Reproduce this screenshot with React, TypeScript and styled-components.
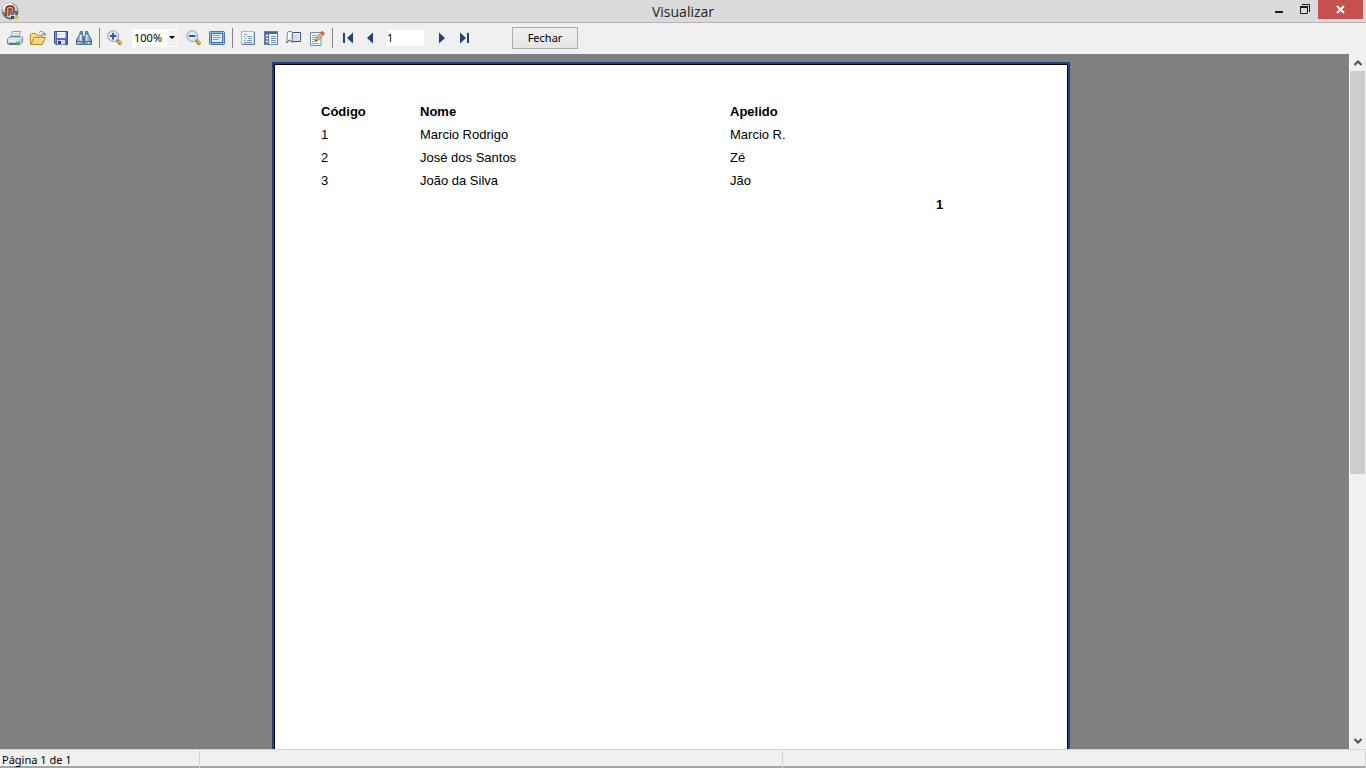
import React, { useState } from "react";
import styled, { createGlobalStyle } from "styled-components";

const GlobalStyle = createGlobalStyle`
  * { box-sizing: border-box; }
  body { margin: 0; background: #f0f0f0; }
`;

const uiFont = `"Segoe UI", "Open Sans", "Noto Sans", sans-serif`;
const smallFont = `Tahoma, "Noto Sans", "Open Sans", sans-serif`;
const navy = "#22427c";

const Window = styled.div`
  display: flex;
  flex-direction: column;
  height: 100vh;
  overflow: hidden;
  font-family: ${uiFont};
  color: #000;
`;

const TitleBar = styled.header`
  display: grid;
  grid-template-columns: 1fr auto 1fr;
  flex: none;
  height: 23px;
  background: #dadada;
  border-bottom: 1px solid #b4b4b4;
`;

const AppIcon = styled.svg`
  width: 18px;
  height: 18px;
  margin: 2px 0 0 1px;
`;

const Title = styled.h1`
  margin: 0;
  font-size: 14px;
  line-height: 23px;
  font-weight: 400;
  color: #222;
`;

const WindowControls = styled.div`
  display: flex;
  justify-content: flex-end;
  padding-right: 3px;
`;

const ControlButton = styled.button<{ $close?: boolean }>`
  display: flex;
  align-items: center;
  justify-content: center;
  width: ${(p) => (p.$close ? 45 : 26)}px;
  height: ${(p) => (p.$close ? 19 : 18)}px;
  padding: 0;
  border: 0;
  background: ${(p) => (p.$close ? "#c75050" : "transparent")};
`;

const Toolbar = styled.div`
  display: flex;
  align-items: center;
  flex: none;
  height: 31px;
  padding: 0 3px 1px;
  background: #f0f0f0;
`;

const ToolButton = styled.button`
  display: flex;
  align-items: center;
  flex: none;
  width: 23px;
  height: 22px;
  padding: 0 3px 0 4px;
  border: 0;
  background: transparent;
  svg { display: block; }
`;

const Separator = styled.span`
  flex: none;
  width: 1px;
  height: 20px;
  margin: 0 3px 0 4px;
  background: #858585;
`;

const ZoomField = styled.label`
  position: relative;
  flex: none;
  width: 46px;
  height: 18px;
  margin: 0 4px 0 6px;
  background: linear-gradient(to right, #fff 35px, #f0f0f0 35px);
  border: 1px solid #fff;
  border-left: 0;
`;

const ZoomSelect = styled.select`
  display: block;
  appearance: none;
  width: 100%;
  height: 16px;
  padding: 0 0 0 2px;
  border: 0;
  background: transparent;
  font-family: ${smallFont};
  font-size: 11px;
  line-height: 16px;
  color: #000;
`;

const ZoomArrow = styled.svg`
  position: absolute;
  right: 2px;
  top: 6px;
  pointer-events: none;
`;

const PageInput = styled.input`
  flex: none;
  width: 37px;
  height: 16px;
  margin: 0 6px 0 5px;
  padding: 0;
  border: 0;
  background: #fff;
  font-family: ${smallFont};
  font-size: 11px;
  line-height: 16px;
  color: #000;
`;

const CloseButton = styled.button`
  flex: none;
  width: 66px;
  height: 22px;
  margin-left: 36px;
  padding: 0;
  border: 1px solid #acacac;
  background: linear-gradient(#f0f0f0, #e5e5e5);
  font-family: ${smallFont};
  font-size: 11px;
  line-height: 20px;
  color: #000;
`;

const Workspace = styled.main`
  display: flex;
  flex: 1;
  min-height: 0;
`;

const Canvas = styled.section`
  flex: 1;
  min-width: 0;
  overflow: hidden;
  padding: 8px 7px 0 0;
  background: #808080;
`;

const Paper = styled.article`
  max-width: 798px;
  min-height: 1128px;
  margin: 0 auto;
  padding: 36px 46px;
  background: #fff;
  border: 2px solid #22407c;
  box-shadow: inset 0 0 0 1px #000010;
`;

const Report = styled.table`
  width: 100%;
  table-layout: fixed;
  border-collapse: collapse;
  font-family: "Liberation Sans", Arial, sans-serif;
  font-size: 13px;
  line-height: 15px;
`;

const Column = styled.col<{ $width?: number }>`
  width: ${(p) => (p.$width ? `${p.$width}px` : "auto")};
`;

const Cell = styled.td`
  height: 23px;
  padding: 0 0 0 1px;
  text-align: left;
  vertical-align: middle;
`;

const Total = styled(Cell)`
  height: 25px;
  font-weight: 700;
`;

const Scrollbar = styled.div`
  display: flex;
  flex-direction: column;
  flex: none;
  width: 17px;
  padding-right: 1px;
  background: #f0f0f0;
  border-left: 1px solid #fff;
`;

const ScrollArrow = styled.button`
  display: flex;
  align-items: center;
  justify-content: center;
  flex: none;
  height: 17px;
  padding: 0;
  border: 0;
  background: transparent;
`;

const ScrollTrack = styled.div`
  flex: 1;
`;

const ScrollThumb = styled.div`
  height: 61%;
  background: #cdcdcd;
`;

const StatusBar = styled.footer`
  display: grid;
  grid-template-columns: 200px 583px 1fr;
  flex: none;
  height: 19px;
  background: #f0f0f0;
  border-top: 1px solid #d4d4d4;
  border-bottom: 2px solid #a6a6a6;
`;

const StatusPanel = styled.span`
  margin-top: 1px;
  padding-left: 2px;
  border-right: 1px solid #d4d4d4;
  font-family: "Noto Sans", "Open Sans", sans-serif;
  font-size: 11px;
  line-height: 18px;
  white-space: nowrap;
`;

const Icon = ({ children }: { children: React.ReactNode }) => (
  <svg width="16" height="16" viewBox="0 0 16 16" fill="none" aria-hidden="true">
    {children}
  </svg>
);

const PrinterIcon = () => (
  <Icon>
    <path d="M5.5 1.5h8l-2.5 6H3.5z" fill="#f4faff" stroke="#8b9bb0" />
    <path d="M6.5 3.5h5M5.8 5.5h5" stroke="#a7c4dd" />
    <path d="M.5 9L3.5 6.5h10l2 1V12l-2.5 2.5H1.5l-1-1z" fill="#c3ccd5" stroke="#728296" />
    <path d="M1 9h11.5l2.5-1.5" stroke="#f8fbfd" />
    <path d="M1.5 10h10.5v2H1.5z" fill="#e8eef3" />
    <path d="M2 13h10.5v1.5H2z" fill="#596b7d" />
    <path d="M9 11.5h4V14H9z" fill="#36c943" />
  </Icon>
);

const FolderIcon = () => (
  <Icon>
    <path d="M.5 14V4.5l1-1h4l1.5 1.8h5.5V8" fill="#ffdf7d" stroke="#bd851f" />
    <path d="M.8 14.5L4 7.5h11.5l-3.2 7z" fill="#ffd36d" stroke="#bd851f" />
    <path d="M4.8 8.5H14" stroke="#fff1bb" />
    <path d="M9 2.5c2-2 4.5-1.2 5 1.5" stroke="#6984a5" />
    <path d="M11.8 3.2h3.7v3z" fill="#6984a5" />
  </Icon>
);

const SaveIcon = () => (
  <Icon>
    <path d="M1.5 1.5h13v13H3l-1.5-1.5z" fill="#5869c5" stroke="#3847a0" />
    <path d="M4 2h8.5v6H4z" fill="#f4f7ff" />
    <path d="M4 4.5h8.5" stroke="#ccd5ef" />
    <path d="M4 10h8v4.5H4z" fill="#d3dae9" />
    <path d="M5 11h3v3H5z" fill="#2d3a77" />
    <path d="M2.5 2.5v10" stroke="#8997df" />
  </Icon>
);

const FindIcon = () => (
  <Icon>
    <path d="M4.5 1.5h2v3l1 2.5v7.5h-7V10l3-5.5z" fill="#8caacd" stroke="#486b98" />
    <path d="M9.5 1.5h2l1 3 3 5.5v4.5h-7V7l1-2.5z" fill="#8caacd" stroke="#486b98" />
    <path d="M6.5 6.5h3v4h-3z" fill="#52749f" />
    <path d="M4.5 5v6M10.5 5v6" stroke="#e3effb" strokeWidth="1.5" />
    <path d="M2.5 11v3M12.5 11v3" stroke="#e3effb" />
    <path d="M1 11.5h6M9 11.5h6M4 3.5h3M9 3.5h3" stroke="#486b98" />
  </Icon>
);

const ZoomIcon = ({ plus }: { plus?: boolean }) => (
  <Icon>
    <path d="M10 10l4.2 4.2" stroke="#9b7330" strokeWidth="3.4" />
    <path d="M11 10.5l3.3 3.2" stroke="#f0c95b" strokeWidth="1.6" />
    <circle cx="6.2" cy="6.2" r="5.4" fill="#e4effc" stroke="#8fa1b8" />
    <circle cx="6.2" cy="6.2" r="4.3" stroke="#c7d6e9" />
    <path d="M3 6h6.4" stroke="#315a96" strokeWidth="2" />
    {plus && <path d="M6 3v6.4" stroke="#315a96" strokeWidth="2" />}
  </Icon>
);

const FullScreenIcon = () => (
  <Icon>
    <rect x=".5" y="1.5" width="15" height="13" rx="1" fill="#8fb6f0" stroke="#4672b8" />
    <rect x="2.5" y="3.5" width="11" height="9" fill="#eaf3ff" stroke="#3f6bb1" />
    <path d="M4 5.5h7M4 7.5h8M4 9.5h6" stroke="#6f98d8" />
  </Icon>
);

const OutlineIcon = () => (
  <Icon>
    <rect x="1.5" y="1.5" width="12.5" height="12.5" fill="#f0f6ff" stroke="#a5bddd" />
    <path d="M14.5 2v12.5H2" stroke="#5c7caa" />
    <path d="M4 4.5h3M7 6.5h5M8 8.5h4M7 10.5h5M4 12.5h8" stroke="#7596c6" />
    <path d="M4 6.5h1M5 8.5h1M4 10.5h1" stroke="#5b80b6" />
  </Icon>
);

const ThumbnailsIcon = () => (
  <Icon>
    <rect x="1.5" y="1.5" width="13" height="13" fill="#f1f6fe" stroke="#657fa9" />
    <path d="M2 2h4v12H2z" fill="#5a78a8" />
    <path d="M2 2h12v2H2z" fill="#4b6898" />
    <path d="M3 5.5h2M3 8.5h2M3 11.5h2" stroke="#fff" strokeWidth="1.6" />
    <path d="M8 6.5h5M8 8.5h5M8 10.5h5M8 12.5h5" stroke="#7796c4" />
  </Icon>
);

const PageSetupIcon = () => (
  <Icon>
    <path d="M6.5 2.5h8v9h-8z" fill="#cfe0f5" stroke="#3f5068" />
    <path d="M8 3.5h5.5v7" stroke="#fff" />
    <path d="M1.5 2.5L3 1.5h2.5l1 2v8.5l-2-2H3L.8 13z" fill="#fff" stroke="#74849a" />
    <path d="M5.5 2v7" stroke="#c6d1de" />
    <path d="M.8 13c2-3 4-3 6 0" stroke="#5a6b80" />
  </Icon>
);

const EditIcon = () => (
  <Icon>
    <path d="M1.5 2.5H12v13H1.5z" fill="#edf5ff" stroke="#718db5" />
    <path d="M3 5.5h5M3 7.5h4M3 9.5h3M3 11.5h3M3 13.5h7" stroke="#86a5d0" />
    <path d="M6.5 11l1-3 5-6L15 4.2 9.5 10z" fill="#eebd55" stroke="#92671f" strokeWidth=".8" />
    <path d="M11.5 2.8L13.2.8 16 3.2l-1.8 2z" fill="#d65b62" />
    <path d="M6 11.5l.5-2 1.7 1.4z" fill="#29364a" />
  </Icon>
);

const NavIcon = ({ back, bar }: { back?: boolean; bar?: boolean }) => (
  <Icon>
    {back ? (
      <path d={bar ? "M13 2.5v11L7 8z" : "M10 2.5v11L4 8z"} fill={navy} />
    ) : (
      <path d={bar ? "M3 2.5v11L9 8z" : "M5 2.5v11L11 8z"} fill={navy} />
    )}
    {bar && <path d={back ? "M3 3h2v10H3z" : "M10 3h2v10h-2z"} fill={navy} />}
  </Icon>
);

const people = [
  { code: 1, name: "Marcio Rodrigo", nickname: "Marcio R." },
  { code: 2, name: "José dos Santos", nickname: "Zé" },
  { code: 3, name: "João da Silva", nickname: "Jão" },
];

export default function App() {
  const [page, setPage] = useState("1");

  return (
    <>
      <GlobalStyle />
      <Window>
        <TitleBar>
          <AppIcon viewBox="0 0 18 18" aria-hidden="true">
            <circle cx="9" cy="9" r="8" fill="#d9d2cc" stroke="#8d8783" />
            <path d="M2 7a8 8 0 0 1 9-5" fill="none" stroke="#fff" strokeWidth="2" />
            <path d="M5 14V7q0-3 4-3t4 3v4" fill="#dca184" stroke="#6a3023" strokeWidth="1.5" />
            <path d="M8 14V7h2v5" fill="none" stroke="#8e3a2b" strokeWidth="1.3" />
            <path d="M2 10l3 5 6 2" fill="none" stroke="#55504e" strokeWidth="1.3" />
            <path d="M10 10h3v3h-3z" fill="#4c7896" />
            <path d="M14 9h3v4h-3z" fill="#59733c" />
            <path d="M10 14h3v3h-3z" fill="#374a62" />
            <path d="M14 14h3v3h-3z" fill="#dcb844" />
          </AppIcon>
          <Title>Visualizar</Title>
          <WindowControls>
            <ControlButton aria-label="Minimizar">
              <svg width="8" height="10"><path d="M0 7h8v2H0z" fill="#1c1c1c" /></svg>
            </ControlButton>
            <ControlButton aria-label="Restaurar">
              <svg width="10" height="10" fill="none" stroke="#1c1c1c">
                <path d="M2 .5h7.5V8" />
                <path d="M.5 3v6.5h7V3" />
                <path d="M0 3h8" strokeWidth="2" />
              </svg>
            </ControlButton>
            <ControlButton $close aria-label="Fechar janela">
              <svg width="9" height="9"><path d="M1 1l7 7M8 1L1 8" stroke="#fff" strokeWidth="2" /></svg>
            </ControlButton>
          </WindowControls>
        </TitleBar>

        <Toolbar role="toolbar" aria-label="Visualização">
          <ToolButton aria-label="Imprimir"><PrinterIcon /></ToolButton>
          <ToolButton aria-label="Abrir"><FolderIcon /></ToolButton>
          <ToolButton aria-label="Salvar"><SaveIcon /></ToolButton>
          <ToolButton aria-label="Localizar"><FindIcon /></ToolButton>
          <Separator />
          <ToolButton aria-label="Aumentar zoom"><ZoomIcon plus /></ToolButton>
          <ZoomField>
            <ZoomSelect aria-label="Zoom" defaultValue="100%">
              <option>100%</option>
            </ZoomSelect>
            <ZoomArrow width="6" height="3" aria-hidden="true"><path d="M0 0h6L3 3z" fill="#000" /></ZoomArrow>
          </ZoomField>
          <ToolButton aria-label="Diminuir zoom"><ZoomIcon /></ToolButton>
          <ToolButton aria-label="Tela cheia"><FullScreenIcon /></ToolButton>
          <Separator />
          <ToolButton aria-label="Estrutura"><OutlineIcon /></ToolButton>
          <ToolButton aria-label="Miniaturas"><ThumbnailsIcon /></ToolButton>
          <ToolButton aria-label="Configurar página"><PageSetupIcon /></ToolButton>
          <ToolButton aria-label="Editar página"><EditIcon /></ToolButton>
          <Separator />
          <ToolButton aria-label="Primeira página"><NavIcon back bar /></ToolButton>
          <ToolButton aria-label="Página anterior"><NavIcon back /></ToolButton>
          <PageInput aria-label="Página" value={page} onChange={(e) => setPage(e.target.value)} />
          <ToolButton aria-label="Próxima página"><NavIcon /></ToolButton>
          <ToolButton aria-label="Última página"><NavIcon bar /></ToolButton>
          <CloseButton>Fechar</CloseButton>
        </Toolbar>

        <Workspace>
          <Canvas>
            <Paper>
              <Report>
                <colgroup>
                  <Column $width={99} />
                  <Column $width={310} />
                  <Column $width={206} />
                  <Column />
                </colgroup>
                <thead>
                  <tr>
                    <Cell as="th" scope="col">Código</Cell>
                    <Cell as="th" scope="col">Nome</Cell>
                    <Cell as="th" scope="col" colSpan={2}>Apelido</Cell>
                  </tr>
                </thead>
                <tbody>
                  {people.map((person) => (
                    <tr key={person.code}>
                      <Cell>{person.code}</Cell>
                      <Cell>{person.name}</Cell>
                      <Cell colSpan={2}>{person.nickname}</Cell>
                    </tr>
                  ))}
                </tbody>
                <tfoot>
                  <tr>
                    <Cell colSpan={3} />
                    <Total>1</Total>
                  </tr>
                </tfoot>
              </Report>
            </Paper>
          </Canvas>
          <Scrollbar>
            <ScrollArrow aria-label="Rolar para cima">
              <svg width="8" height="6" fill="none"><path d="M.5 5L4 1.5 7.5 5" stroke="#505050" strokeWidth="2" /></svg>
            </ScrollArrow>
            <ScrollTrack><ScrollThumb /></ScrollTrack>
            <ScrollArrow aria-label="Rolar para baixo">
              <svg width="8" height="6" fill="none"><path d="M.5 1L4 4.5 7.5 1" stroke="#505050" strokeWidth="2" /></svg>
            </ScrollArrow>
          </Scrollbar>
        </Workspace>

        <StatusBar>
          <StatusPanel>Página 1 de 1</StatusPanel>
          <StatusPanel />
          <StatusPanel />
        </StatusBar>
      </Window>
    </>
  );
}
